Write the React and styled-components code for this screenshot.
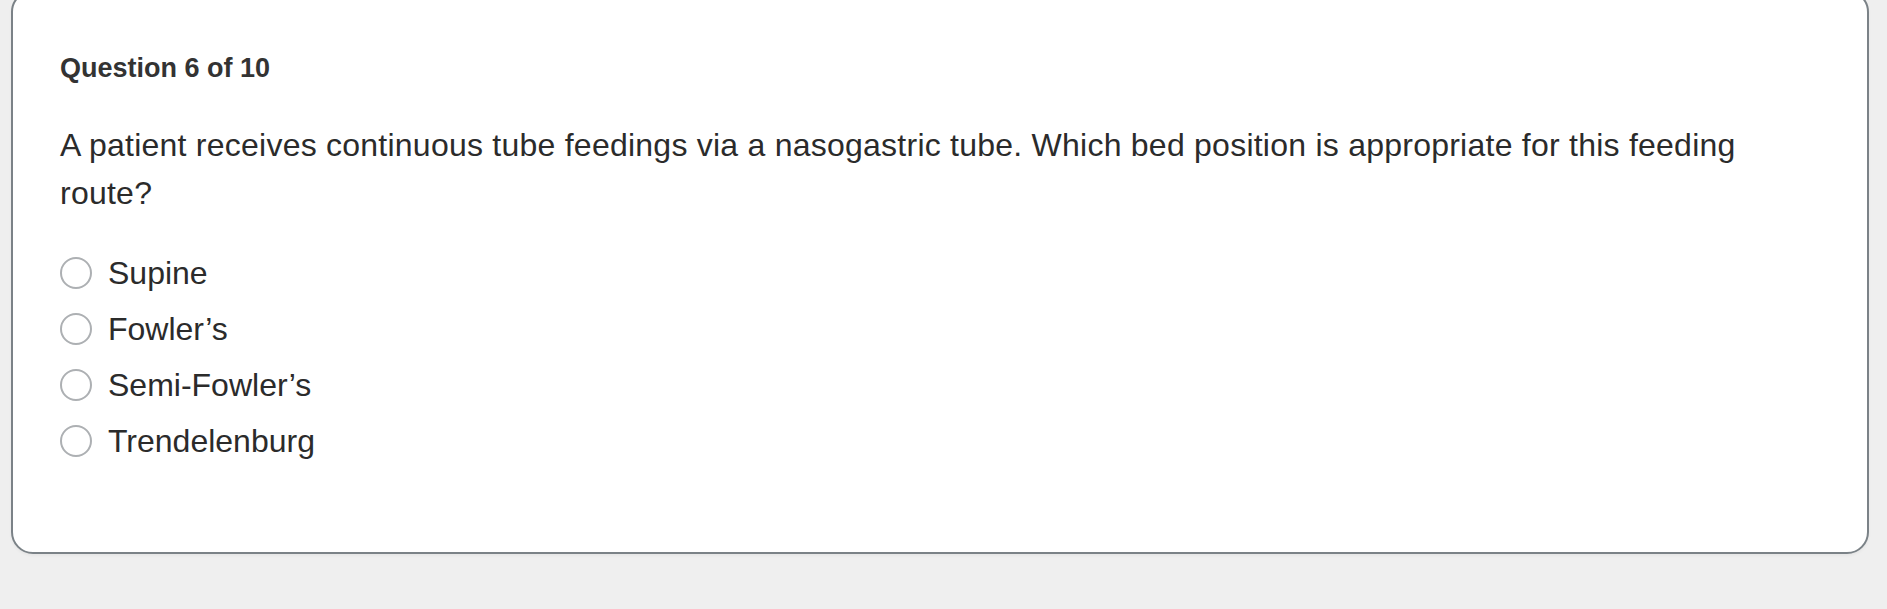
import React from "react"
import styled, { createGlobalStyle } from "styled-components"

const GlobalStyle = createGlobalStyle`
  html, body {
    margin: 0;
    padding: 0;
    background: #efefef;
    font-family: "Liberation Sans", Arial, sans-serif;
  }
`

const Page = styled.div`
  padding: 0 18px 0 11px;
  min-height: 609px;
  overflow: hidden;
`

const Card = styled.section`
  margin-top: -10px;
  background: #ffffff;
  border: 2px solid #7b8287;
  border-radius: 22px;
  padding: 60px 48px 83px 47px;
  box-shadow: 0 2px 3px rgba(0, 0, 0, 0.04);
`

const Header = styled.h2`
  margin: 0;
  font-size: 27px;
  line-height: 1.2;
  font-weight: 700;
  color: #333;
`

const Prompt = styled.p`
  margin: 37px 0 28px;
  font-size: 32px;
  line-height: 48px;
  letter-spacing: 0.24px;
  color: #2b2b2b;
`

const Options = styled.div`
  display: flex;
  flex-direction: column;
`

const Option = styled.label`
  display: flex;
  align-items: center;
  gap: 16px;
  height: 56px;
  font-size: 32px;
  color: #2b2b2b;
  cursor: pointer;
`

const Radio = styled.span`
  width: 32px;
  height: 32px;
  box-sizing: border-box;
  border: 2px solid #adb0b3;
  border-radius: 50%;
  background: #fff;
  flex-shrink: 0;
`

const options = ["Supine", "Fowler’s", "Semi-Fowler’s", "Trendelenburg"]

export default function App() {
  return (
    <Page>
      <GlobalStyle />
      <Card>
        <Header>Question 6 of 10</Header>
        <Prompt>
          A patient receives continuous tube feedings via a nasogastric tube.
          Which bed position is appropriate for this feeding route?
        </Prompt>
        <Options>
          {options.map((opt) => (
            <Option key={opt}>
              <Radio />
              {opt}
            </Option>
          ))}
        </Options>
      </Card>
    </Page>
  )
}
